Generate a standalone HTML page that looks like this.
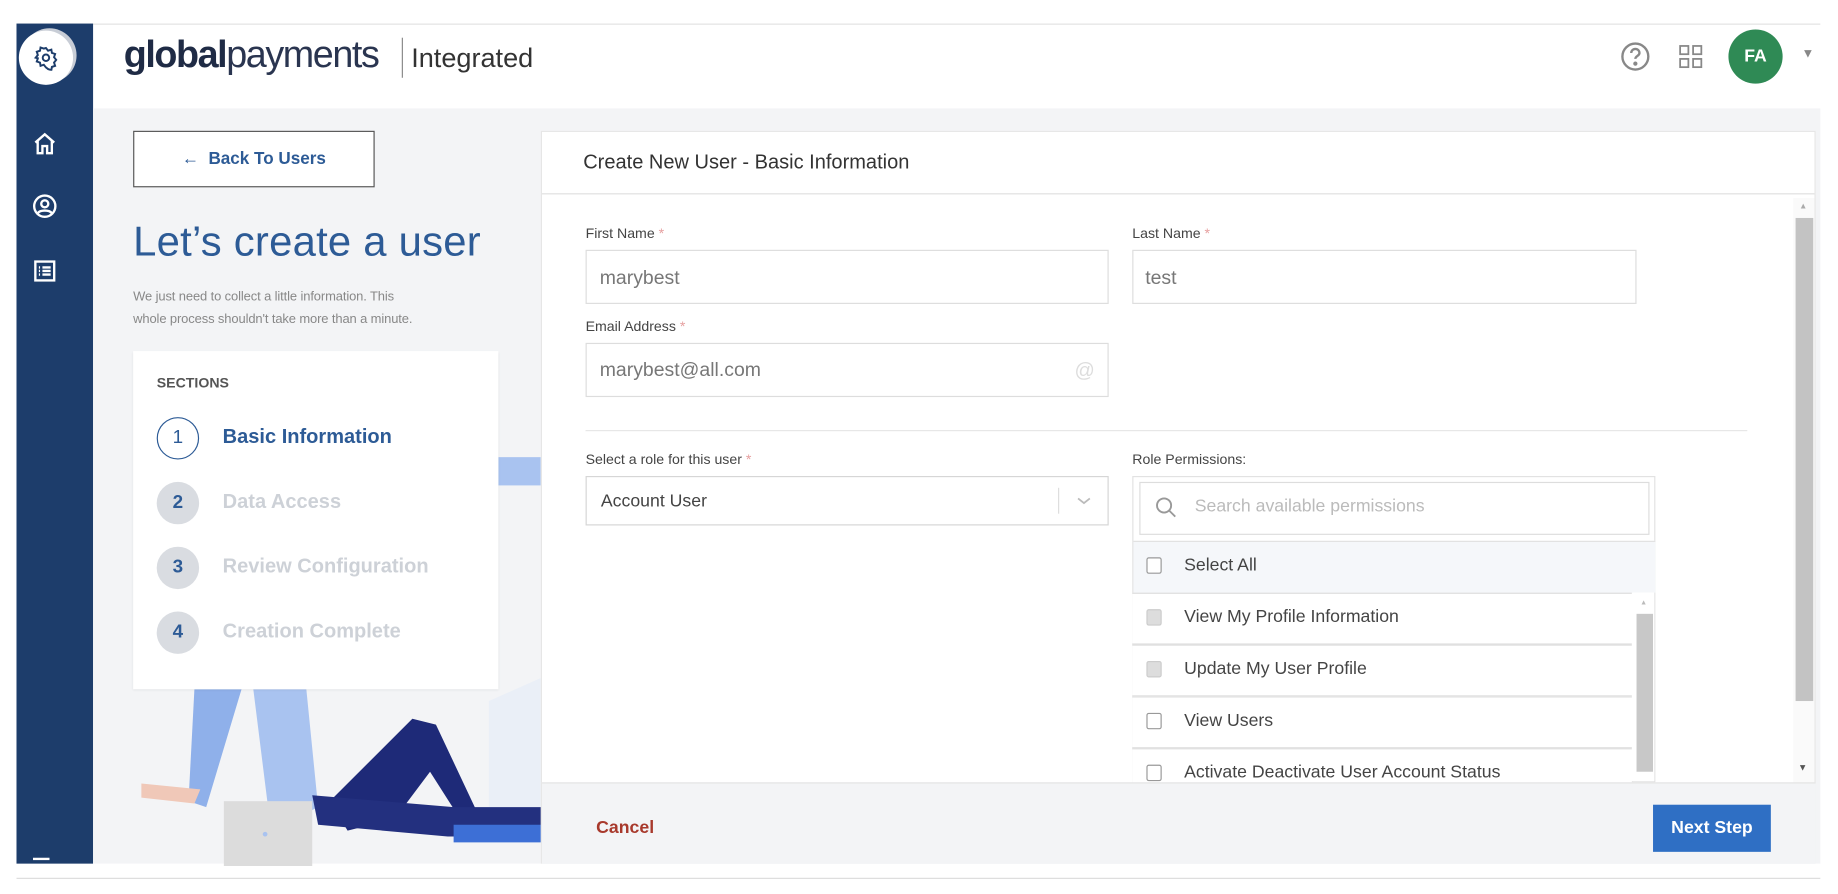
<!DOCTYPE html>
<html><head><meta charset="utf-8"><style>
*{box-sizing:border-box;margin:0;padding:0}
html,body{width:1838px;height:894px;overflow:hidden;background:#fff;font-family:"Liberation Sans",sans-serif}
#w{position:absolute;left:0;top:0;width:1560px;height:759px;transform:scale(1.17821);transform-origin:0 0}
.a{position:absolute}
.lbl{font-size:12px;color:#444}
.lbl i{color:#e6a0a0;font-style:normal}
.inp{border:1px solid #ddd;background:#fff}
.val{font-size:16.5px;color:#777}
.row{position:absolute;left:961px;width:424px;height:44px;border-top:1px solid #dcdcdc;border-bottom:1px solid #e4e4e4;background:#fff;font-size:15px;color:#444}
.row span{position:absolute;left:44px;top:11px}
.cb{position:absolute;left:12px;top:13px;width:13px;height:14px;border:1px solid #999;border-radius:2px;background:#fff}
.cb.d{background:#ddd;border-color:#ccc}
.st{position:absolute;left:133px;width:36px;height:36px;border-radius:50%;background:#d9dce1;color:#2d5b96;font-size:16px;font-weight:bold;text-align:center;line-height:36px}
.stt{position:absolute;left:189px;font-size:17px;color:#cdd1d7;font-weight:bold}
</style></head><body><div id="w">
<div class="a" style="left:14px;top:20px;width:1531px;height:1px;background:#e3e3e3"></div>
<div class="a" style="left:14px;top:745px;width:1531px;height:1px;background:#ddd"></div>
<div class="a" style="left:14px;top:20px;width:65px;height:713px;background:#1d3d6b"></div>
<div class="a" style="left:16px;top:26px;width:46px;height:46px;border-radius:50%;background:#fff;box-shadow:3px -2px 0 #c8cdd6"></div>
<svg class="a" style="left:28px;top:38px" width="22" height="22" viewBox="0 0 24 24" fill="none" stroke="#1d3d6b" stroke-width="1.8"><circle cx="12" cy="12" r="3"/><path d="M12 3l2 2.5 3-1 .5 3 3 1-1 3 2 2.5-2 2.5 1 3-3 1-.5 3-3-1L12 21l-2-2.5-3 1-.5-3-3-1 1-3L2.5 12l2-2.5-1-3 3-1 .5-3 3 1z"/></svg>
<svg class="a" style="left:27px;top:111px" width="22" height="22" viewBox="0 0 22 22" fill="none" stroke="#fff" stroke-width="2"><path d="M3 10L11 3l8 7M5 8v11h4v-6h4v6h4V8"/></svg>
<svg class="a" style="left:27px;top:164px" width="22" height="22" viewBox="0 0 22 22" fill="none" stroke="#fff" stroke-width="2"><circle cx="11" cy="11" r="9"/><circle cx="11" cy="9" r="3"/><path d="M5 17c2-3 10-3 12 0"/></svg>
<svg class="a" style="left:27px;top:219px" width="22" height="22" viewBox="0 0 22 22" fill="none" stroke="#fff" stroke-width="2"><rect x="3" y="3" width="16" height="16"/><path d="M6 8h1M9 8h7M6 11h1M9 11h7M6 14h1M9 14h7"/></svg>
<div class="a" style="left:28px;top:728px;width:14px;height:2px;background:#fff"></div>
<div class="a" style="left:105px;top:28px;font-size:32px;color:#1f2b45;letter-spacing:-1.2px"><b>global</b><span style="font-weight:300;color:#2a3550">payments</span></div>
<div class="a" style="left:341px;top:32px;width:1px;height:34px;background:#888"></div>
<div class="a" style="left:349px;top:36px;font-size:23px;color:#333">Integrated</div>
<svg class="a" style="left:1375px;top:35px" width="26" height="26" viewBox="0 0 26 26" fill="none" stroke="#888" stroke-width="2"><circle cx="13" cy="13" r="11"/><path d="M9.5 10a3.5 3.5 0 117 0c0 2.5-3.5 2.5-3.5 5"/><circle cx="13" cy="19" r=".8" fill="#888"/></svg>
<svg class="a" style="left:1425px;top:38px" width="20" height="20" viewBox="0 0 20 20" fill="none" stroke="#888" stroke-width="1.5"><rect x="1" y="1" width="7" height="7"/><rect x="12" y="1" width="7" height="7"/><rect x="1" y="12" width="7" height="7"/><rect x="12" y="12" width="7" height="7"/></svg>
<div class="a" style="left:1467px;top:25px;width:46px;height:46px;border-radius:50%;background:#2f8a55;color:#fff;font-weight:bold;font-size:15px;text-align:center;line-height:46px">FA</div>
<div class="a" style="left:1529px;top:40px;font-size:11px;color:#888">▼</div>
<div class="a" style="left:79px;top:92px;width:1466px;height:641px;background:#f3f4f6"></div>
<div class="a" style="left:423px;top:388px;width:36px;height:24px;background:#a9c3f0"></div>
<svg class="a" style="left:115px;top:560px" width="345" height="175" viewBox="0 0 345 175">
<path d="M300 35l45-20v120l-45 0z" fill="#e6edf8" opacity=".7"/>
<path d="M50 25l40 0-30 100-15-5z" fill="#8fb0ea"/>
<path d="M100 25l45 0 10 100-40 20z" fill="#a9c3f0"/>
<path d="M5 105l50 5-5 12-45-5z" fill="#f0c8b8"/>
<path d="M165 120l70-70 20 5 40 85-10 10-35-55-30 40-40 10z" fill="#1e2a78"/>
<path d="M150 115l120 10 75 0v25l-80 0-110-10z" fill="#23307f"/>
<path d="M270 140h75v15h-75z" fill="#3d6fd6"/>
<rect x="75" y="120" width="75" height="55" fill="#dcdcdc"/>
<circle cx="110" cy="148" r="2" fill="#a9c3f0"/>
</svg>
<div class="a" style="left:113px;top:111px;width:205px;height:48px;background:#fff;border:1px solid #555;color:#2d5b96;font-weight:bold;font-size:14.5px;text-align:center;line-height:46px">←&nbsp;&nbsp;Back To Users</div>
<div class="a" style="left:113px;top:185px;font-size:35.5px;color:#2d5b96;letter-spacing:.2px">Let’s create a user</div>
<div class="a" style="left:113px;top:243px;font-size:11px;color:#888;line-height:19px;white-space:nowrap;letter-spacing:-.1px">We just need to collect a little information. This<br>whole process shouldn't take more than a minute.</div>
<div class="a" style="left:113px;top:298px;width:310px;height:287px;background:#fff;box-shadow:0 1px 2px rgba(0,0,0,.08)"></div>
<div class="a" style="left:133px;top:318px;font-size:12px;color:#555;font-weight:bold">SECTIONS</div>
<div class="st" style="top:354px;background:#fff;border:1.5px solid #2d5b96;line-height:33px;font-weight:normal">1</div>
<div class="stt" style="top:361px;color:#2d5b96">Basic Information</div>
<div class="st" style="top:409px">2</div><div class="stt" style="top:416px">Data Access</div>
<div class="st" style="top:464px">3</div><div class="stt" style="top:471px">Review Configuration</div>
<div class="st" style="top:519px">4</div><div class="stt" style="top:526px">Creation Complete</div>
<div class="a" style="left:459px;top:111px;width:1082px;height:622px;background:#fff;border:1px solid #e6e6e6"></div>
<div class="a" style="left:495px;top:128px;font-size:17px;color:#333">Create New User - Basic Information</div>
<div class="a" style="left:460px;top:164px;width:1080px;height:1px;background:#e0e0e0"></div>
<div class="a lbl" style="left:497px;top:191px">First Name <i>*</i></div>
<div class="a lbl" style="left:961px;top:191px">Last Name <i>*</i></div>
<div class="a inp" style="left:497px;top:212px;width:444px;height:46px"></div>
<div class="a val" style="left:509px;top:227px">marybest</div>
<div class="a inp" style="left:961px;top:212px;width:428px;height:46px"></div>
<div class="a val" style="left:972px;top:227px">test</div>
<div class="a lbl" style="left:497px;top:270px">Email Address <i>*</i></div>
<div class="a inp" style="left:497px;top:291px;width:444px;height:46px"></div>
<div class="a val" style="left:509px;top:305px">marybest@all.com</div>
<div class="a" style="left:912px;top:305px;font-size:17px;color:#ddd">@</div>
<div class="a" style="left:497px;top:365px;width:986px;height:1px;background:#e6e6e6"></div>
<div class="a lbl" style="left:497px;top:383px">Select a role for this user <i>*</i></div>
<div class="a inp" style="left:497px;top:404px;width:444px;height:42px;border-color:#d6d6d6"></div>
<div class="a" style="left:510px;top:417px;font-size:15px;color:#444">Account User</div>
<div class="a" style="left:898px;top:414px;width:1px;height:22px;background:#ddd"></div>
<svg class="a" style="left:913px;top:420px" width="14" height="10" viewBox="0 0 14 10" fill="none" stroke="#bbb" stroke-width="1.5"><path d="M2 3l5 4 5-4"/></svg>
<div class="a lbl" style="left:961px;top:383px">Role Permissions:</div>
<div class="a" style="left:961px;top:404px;width:444px;height:260px;border:1px solid #e2e2e2;background:#fff"></div>
<div class="a inp" style="left:967px;top:409px;width:433px;height:45px"></div>
<svg class="a" style="left:980px;top:421px" width="20" height="20" viewBox="0 0 20 20" fill="none" stroke="#999" stroke-width="1.6"><circle cx="8" cy="8" r="6"/><path d="M12.5 12.5l5 5"/></svg>
<div class="a" style="left:1014px;top:421px;font-size:15px;color:#bbb">Search available permissions</div>
<div class="a" style="left:962px;top:459px;width:443px;height:44px;background:#f5f7fa;border-top:1px solid #e2e2e2;font-size:15px;color:#444"><div class="cb" style="left:11px"></div><span style="position:absolute;left:43px;top:11px">Select All</span></div>
<div class="row" style="top:503px"><div class="cb d"></div><span>View My Profile Information</span></div>
<div class="row" style="top:547px"><div class="cb d"></div><span>Update My User Profile</span></div>
<div class="row" style="top:591px"><div class="cb"></div><span>View Users</span></div>
<div class="row" style="top:635px;height:30px;border-bottom:none"><div class="cb"></div><span>Activate Deactivate User Account Status</span></div>
<div class="a" style="left:1386px;top:503px;width:18px;height:160px;background:#fff"></div>
<div class="a" style="left:1392px;top:509px;font-size:6px;color:#bbb">▲</div>
<div class="a" style="left:1389px;top:521px;width:14px;height:134px;background:#c8c8c8"></div>
<div class="a" style="left:1522px;top:168px;width:18px;height:496px;background:#fafafa"></div>
<div class="a" style="left:1527px;top:172px;font-size:7px;color:#aaa">▲</div>
<div class="a" style="left:1524px;top:185px;width:15px;height:410px;background:#c3c3c3"></div>
<div class="a" style="left:1526px;top:647px;font-size:8px;color:#555">▼</div>
<div class="a" style="left:460px;top:664px;width:1081px;height:69px;background:#f3f4f6;border-top:1px solid #e3e3e3"></div>
<div class="a" style="left:506px;top:694px;font-size:15px;font-weight:bold;color:#a8392c">Cancel</div>
<div class="a" style="left:1403px;top:683px;width:100px;height:40px;background:#2f6fc4;color:#fff;font-weight:bold;font-size:15px;text-align:center;line-height:40px">Next Step</div>
</div></body></html>
